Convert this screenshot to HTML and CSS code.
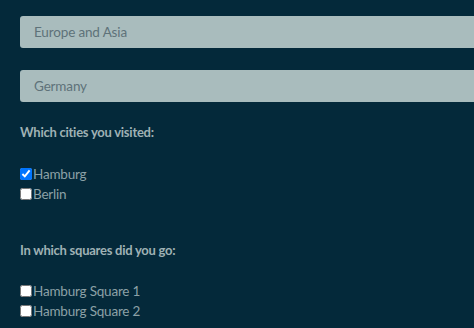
FILE: index.html
```html
<!DOCTYPE html>
<html>
<head>
<meta charset="utf-8">
<link rel="stylesheet" href="styles.css">
</head>
<body>
<div class="page">
  <div class="field"><input class="input" type="text" placeholder="Europe and Asia"></div>
  <div class="field"><input class="input" type="text" placeholder="Germany"></div>
  <div class="group">
    <div class="label">Which cities you visited:</div>
    <label class="check"><input type="checkbox" checked><span>Hamburg</span></label>
    <label class="check"><input type="checkbox"><span>Berlin</span></label>
  </div>
  <div class="group second">
    <div class="label">In which squares did you go:</div>
    <label class="check"><input type="checkbox"><span>Hamburg Square 1</span></label>
    <label class="check"><input type="checkbox"><span>Hamburg Square 2</span></label>
  </div>
</div>
</body>
</html>
```
FILE: styles.css
```css
html, body {
  margin: 0;
  background: #04293a;
  overflow: hidden;
}
body {
  font-family: Lato, "Open Sans", sans-serif;
}
.page {
  padding: 16px 0 0 20px;
  width: 520px;
}
.field {
  margin-bottom: 22px;
}
.input {
  display: block;
  box-sizing: border-box;
  width: 100%;
  height: 32px;
  border: none;
  border-radius: 3px;
  background: #a9bcbd;
  padding: 0 14px;
  font-family: inherit;
  font-size: 13.5px;
  letter-spacing: -0.15px;
  color: #5e7279;
  outline: none;
}
.input::placeholder {
  color: #5e7279;
}
.group {
  display: flex;
  flex-direction: column;
  margin-top: -2px;
}
.label {
  font-weight: bold;
  font-size: 13px;
  letter-spacing: -0.25px;
  color: #9fb1b4;
  line-height: 20px;
  margin-bottom: 22px;
}
.check {
  display: flex;
  align-items: center;
  height: 20px;
  font-size: 13.5px;
  letter-spacing: -0.2px;
  color: #8ca1a7;
}
.check input {
  margin: 0 1px 0 0;
  width: 12px;
  height: 12px;
}
.second {
  margin-top: 36px;
}
.second .label {
  margin-bottom: 21px;
}
```
